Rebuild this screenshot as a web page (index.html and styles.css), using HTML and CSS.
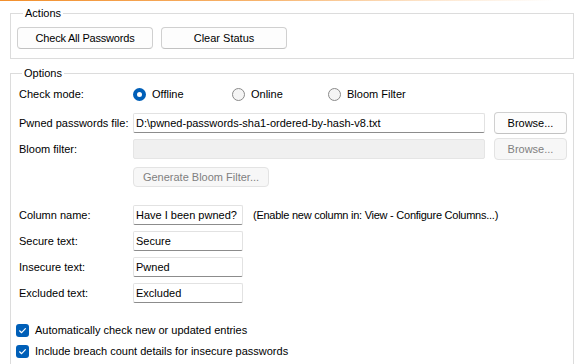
FILE: index.html
```html
<!DOCTYPE html>
<html>
<head>
<meta charset="utf-8">
<link rel="stylesheet" href="styles.css">
</head>
<body>
<div class="accent-line"></div>

<section class="group group-actions">
  <div class="group-title">Actions</div>
  <div class="actions-row">
    <button class="btn btn-check">Check All Passwords</button>
    <button class="btn btn-clear">Clear Status</button>
  </div>
</section>

<section class="group group-options">
  <div class="group-title">Options</div>

  <div class="field-row row-mode">
    <span class="label">Check mode:</span>
    <div class="radios">
      <span class="radio-item item-offline"><span class="radio radio-on"></span>Offline</span>
      <span class="radio-item item-online"><span class="radio"></span>Online</span>
      <span class="radio-item"><span class="radio"></span>Bloom Filter</span>
    </div>
  </div>

  <div class="field-row row-file">
    <span class="label">Pwned passwords file:</span>
    <input class="textbox textbox-wide" type="text" value="D:\pwned-passwords-sha1-ordered-by-hash-v8.txt">
    <button class="btn btn-browse">Browse...</button>
  </div>

  <div class="field-row row-bloom">
    <span class="label">Bloom filter:</span>
    <input class="textbox textbox-wide textbox-disabled" type="text" value="" disabled>
    <button class="btn btn-browse btn-disabled" disabled>Browse...</button>
  </div>

  <div class="field-row row-generate">
    <span class="label"></span>
    <button class="btn btn-generate btn-disabled" disabled>Generate Bloom Filter...</button>
  </div>

  <div class="field-row row-column">
    <span class="label">Column name:</span>
    <input class="textbox textbox-short" type="text" value="Have I been pwned?">
    <span class="note">(Enable new column in: View - Configure Columns...)</span>
  </div>

  <div class="field-row row-text">
    <span class="label">Secure text:</span>
    <input class="textbox textbox-short" type="text" value="Secure">
  </div>

  <div class="field-row row-text">
    <span class="label">Insecure text:</span>
    <input class="textbox textbox-short" type="text" value="Pwned">
  </div>

  <div class="field-row row-text">
    <span class="label">Excluded text:</span>
    <input class="textbox textbox-short" type="text" value="Excluded">
  </div>

  <div class="check-row check-first">
    <span class="checkbox"><svg width="13" height="13" viewBox="0 0 13 13"><path d="M3.6 6.8 L5.6 8.7 L9.4 4.6" fill="none" stroke="#fff" stroke-width="1.2" stroke-linecap="round" stroke-linejoin="round"/></svg></span>
    <span>Automatically check new or updated entries</span>
  </div>

  <div class="check-row check-second">
    <span class="checkbox"><svg width="13" height="13" viewBox="0 0 13 13"><path d="M3.6 6.8 L5.6 8.7 L9.4 4.6" fill="none" stroke="#fff" stroke-width="1.2" stroke-linecap="round" stroke-linejoin="round"/></svg></span>
    <span>Include breach count details for insecure passwords</span>
  </div>
</section>
</body>
</html>
```

FILE: styles.css
```css
* {
  box-sizing: border-box;
}

html, body {
  margin: 0;
  padding: 0;
  background: #ffffff;
  overflow: hidden;
}

body {
  font-family: "Liberation Sans", Arial, sans-serif;
  font-size: 11px;
  color: #000000;
  width: 583px;
  height: 364px;
}

.accent-line {
  height: 1px;
  background: linear-gradient(to right, #f28f2c 0%, #f7b46e 45%, #fde7d0 75%, #ffffff 95%);
}

.group {
  border: 1px solid #dcdcdc;
  margin-left: 10px;
  width: 564px;
}

.group-title {
  height: 14px;
  line-height: 14px;
  margin-top: -8px;
  margin-left: 6px;
  padding: 0 2px;
  width: fit-content;
  background: #ffffff;
}

.group-actions {
  margin-top: 12px;
  padding: 0 6px 9px 6px;
}

.actions-row {
  display: flex;
  gap: 8px;
  margin-top: 7px;
}

.btn {
  font-family: inherit;
  font-size: 11px;
  color: #000000;
  height: 22px;
  padding: 0;
  background: #fdfdfd;
  border: 1px solid #d0d0d0;
  border-bottom-color: #c2c2c2;
  border-radius: 4px;
  display: flex;
  align-items: center;
  justify-content: center;
}

.btn-check {
  width: 136px;
  letter-spacing: -0.2px;
}

.btn-clear {
  width: 126px;
}

.btn-browse {
  width: 73px;
  flex: none;
}

.btn-disabled {
  color: #7f7f7f;
  background: #f7f7f7;
  border-color: #e3e3e3;
}

.btn-generate {
  width: 136px;
  height: 20px;
}

.group-options {
  margin-top: 14px;
  padding: 0 6px 20px 5px;
}

.field-row {
  display: flex;
  align-items: center;
  padding-left: 3px;
}

.label {
  width: 114px;
  flex: none;
}

.row-mode {
  height: 20px;
  margin-top: 4px;
}

.row-file {
  height: 22px;
  margin-top: 8px;
}

.row-bloom {
  height: 22px;
  margin-top: 4px;
}

.row-generate {
  height: 20px;
  margin-top: 7px;
}

.row-column {
  height: 20px;
  margin-top: 18px;
}

.row-text {
  height: 20px;
  margin-top: 6px;
}

.radios {
  display: flex;
  align-items: center;
}

.radio-item {
  display: flex;
  align-items: center;
  gap: 6px;
}

.item-offline {
  width: 99px;
}

.item-online {
  width: 96px;
}

.radio {
  width: 13px;
  height: 13px;
  border-radius: 50%;
  border: 1px solid #8a8a8a;
  background: #f5f5f5;
  flex: none;
}

.radio-on {
  border: 4px solid #005fb8;
  background: #ffffff;
}

.textbox {
  font-family: inherit;
  font-size: 11px;
  color: #000000;
  height: 20px;
  padding: 0 2px;
  margin: 0;
  border: 1px solid #e2e2e2;
  border-bottom-color: #8c8c8c;
  border-radius: 2px;
  background: #ffffff;
  outline: none;
}

.textbox-wide {
  flex: 1;
  margin-right: 9px;
  min-width: 0;
}

.textbox-disabled {
  background: #f0f0f0;
  border-color: #e5e5e5;
}

.textbox-short {
  width: 110px;
  flex: none;
}

.note {
  margin-left: 10px;
  letter-spacing: -0.25px;
}

.check-row {
  display: flex;
  align-items: center;
  height: 20px;
  gap: 6px;
}

.check-first {
  margin-top: 17px;
}

.check-second {
  margin-top: 1px;
}

.checkbox {
  width: 13px;
  height: 13px;
  border-radius: 3px;
  background: #005fb8;
  display: flex;
  flex: none;
}
```
